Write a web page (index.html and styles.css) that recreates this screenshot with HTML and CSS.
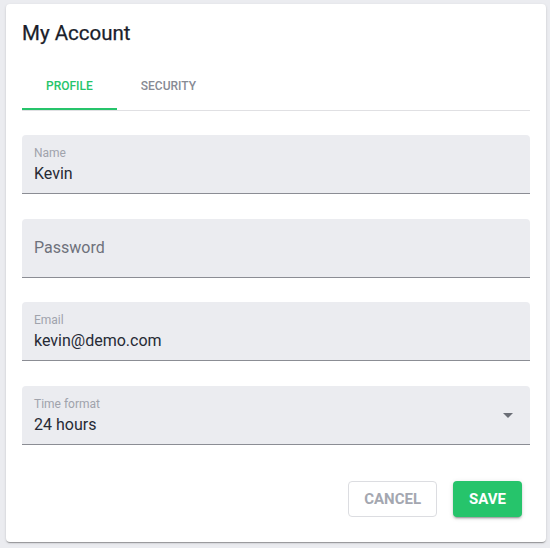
FILE: index.html
```
<!DOCTYPE html>
<html>
<head>
<meta charset="utf-8">
<link rel="stylesheet" href="styles.css">
</head>
<body>
<div class="card">
  <h1 class="title">My Account</h1>
  <div class="tabs">
    <div class="tab active">PROFILE</div>
    <div class="tab">SECURITY</div>
  </div>
  <div class="fields">
    <div class="field">
      <div class="field-body">
        <div class="label">Name</div>
        <div class="value">Kevin</div>
      </div>
    </div>
    <div class="field field-empty">
      <div class="field-body">
        <div class="placeholder">Password</div>
      </div>
    </div>
    <div class="field">
      <div class="field-body">
        <div class="label">Email</div>
        <div class="value">kevin@demo.com</div>
      </div>
    </div>
    <div class="field">
      <div class="field-body">
        <div class="label">Time format</div>
        <div class="value">24 hours</div>
      </div>
      <svg class="arrow" width="10" height="5" viewBox="0 0 10 5"><path d="M0 0 L10 0 L5 5 Z" fill="#6b6e76"/></svg>
    </div>
  </div>
  <div class="actions">
    <button class="btn btn-outline">CANCEL</button>
    <button class="btn btn-primary">SAVE</button>
  </div>
</div>
</body>
</html>
```
FILE: styles.css
```
html, body {
  margin: 0;
  padding: 0;
  background: #ebecf0;
}
body {
  padding: 4px 4px 6px 6px;
  font-family: Roboto, "Liberation Sans", sans-serif;
}
.card {
  width: 540px;
  height: 538px;
  box-sizing: border-box;
  background: #fff;
  border-radius: 4px;
  box-shadow: 0 2px 1px -1px rgba(0,0,0,.2), 0 1px 1px 0 rgba(0,0,0,.14), 0 1px 3px 0 rgba(0,0,0,.12);
  padding: 17px 16px 25px 16px;
  display: flex;
  flex-direction: column;
}
.title {
  margin: 0;
  font-size: 20.5px;
  line-height: 24px;
  font-weight: 400;
  color: #1a1e2b;
  -webkit-text-stroke: 0.25px #1a1e2b;
}
.tabs {
  margin-top: 17px;
  display: flex;
  border-bottom: 1px solid #e0e0e3;
}
.tab {
  height: 48px;
  box-sizing: border-box;
  padding: 0 24px;
  display: flex;
  align-items: center;
  font-size: 12px;
  font-weight: 500;
  color: #878a94;
  border-bottom: 2px solid transparent;
  padding-top: 2px;
}
.tab.active {
  color: #26c46b;
  border-bottom-color: #26c46b;
}
.fields {
  margin-top: 24px;
  display: flex;
  flex-direction: column;
  gap: 24.7px;
}
.field {
  height: 59px;
  box-sizing: border-box;
  background: #ebecf0;
  border-radius: 4px 4px 0 0;
  border-bottom: 1px solid #8b8d94;
  padding: 0 17px 0 12px;
  display: flex;
  align-items: center;
}
.field-body {
  flex: 1;
  align-self: stretch;
  padding-top: 11px;
  display: flex;
  flex-direction: column;
}
.field-empty .field-body {
  padding-top: 0;
  justify-content: center;
}
.label {
  font-size: 12px;
  line-height: 14px;
  color: #a0a3ac;
}
.value {
  margin-top: 4px;
  font-size: 16px;
  line-height: 19px;
  color: #262a35;
}
.placeholder {
  font-size: 16px;
  line-height: 19px;
  color: #6e717b;
}
.arrow {
  display: block;
}
.actions {
  margin-top: 36px;
  display: flex;
  justify-content: flex-end;
  gap: 16px;
  padding-right: 8px;
}
.btn {
  height: 36px;
  box-sizing: border-box;
  padding: 0 16px;
  font-family: Roboto, "Liberation Sans", sans-serif;
  font-size: 15px;
  font-weight: 700;
  border-radius: 4px;
  cursor: pointer;
}
.btn-outline {
  background: #fff;
  border: 1px solid #dcdde1;
  color: #a4a7b0;
  padding: 0 15px;
}
.btn-primary {
  background: #26c46b;
  border: none;
  color: #fff;
  box-shadow: 0 3px 1px -2px rgba(0,0,0,.2), 0 2px 2px 0 rgba(0,0,0,.14), 0 1px 5px 0 rgba(0,0,0,.12);
}
```
